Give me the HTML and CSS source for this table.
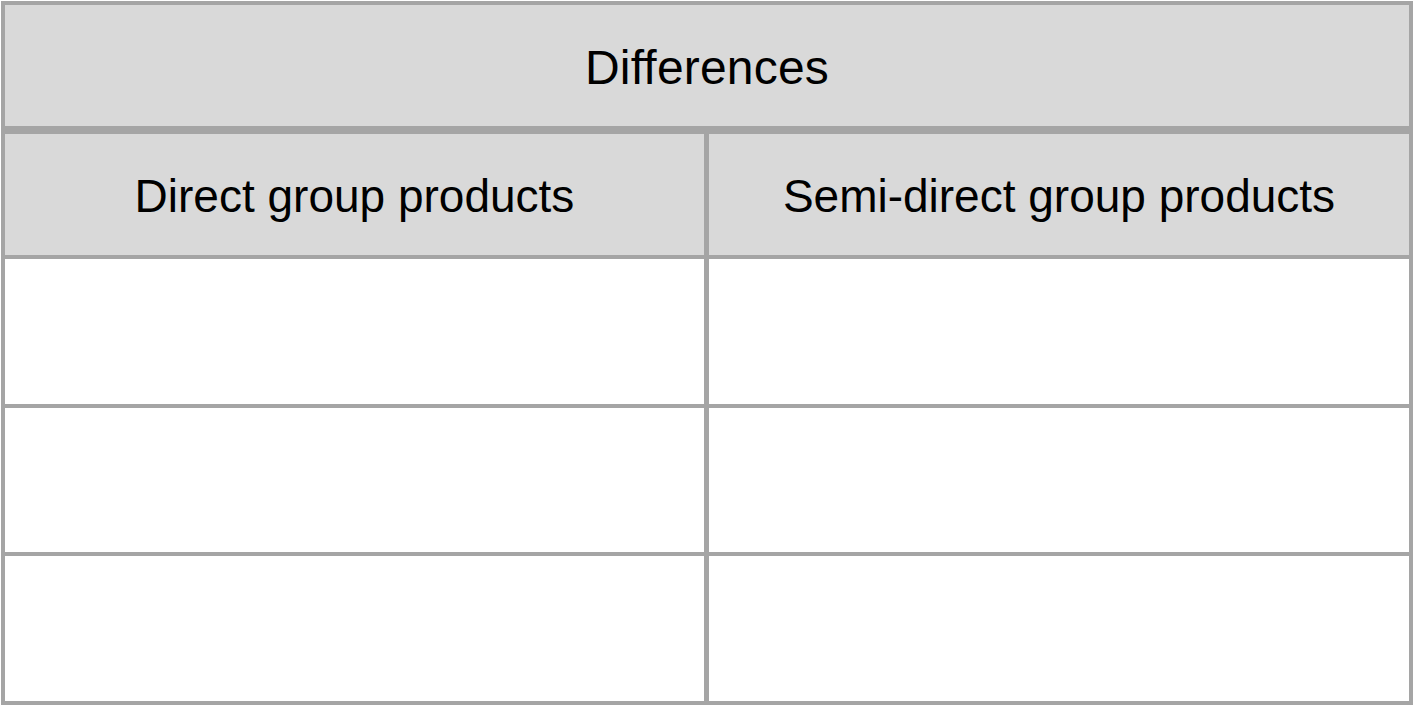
FILE: index.html
```html
<!DOCTYPE html>
<html>
<head>
<meta charset="utf-8">
<link rel="stylesheet" href="styles.css">
</head>
<body>
<table class="diff">
  <colgroup><col class="c1"><col class="c2"></colgroup>
  <thead>
    <tr class="r-title"><th colspan="2">Differences</th></tr>
    <tr class="r-head"><th>Direct group products</th><th>Semi-direct group products</th></tr>
  </thead>
  <tbody>
    <tr class="r-body"><td></td><td></td></tr>
    <tr class="r-body r-mid"><td></td><td></td></tr>
    <tr class="r-body"><td></td><td></td></tr>
  </tbody>
</table>
</body>
</html>
```
FILE: styles.css
```css
html, body { margin: 0; padding: 0; background: #ffffff; }
body { padding: 1px 0 0 1px; }
.diff {
  border-collapse: separate;
  border-spacing: 0;
  table-layout: fixed;
  width: 1412px;
  border-top: 4px solid #a5a5a5;
  border-left: 4px solid #a5a5a5;
  font-family: "Liberation Sans", Arial, sans-serif;
  font-variant-ligatures: none;
  font-feature-settings: "liga" 0, "clig" 0;
  color: #000;
}
.c1 { width: 704px; }
.c2 { width: 704px; }
.diff th, .diff td {
  padding: 0;
  box-sizing: border-box;
  border-right: 4px solid #a5a5a5;
  border-bottom: 4px solid #a5a5a5;
  font-weight: normal;
  font-size: 46px;
  text-align: center;
  vertical-align: middle;
}
.diff th { background: #d9d9d9; }
.diff tr > :first-child:not([colspan]) { border-right-width: 5px; }
.r-title th { height: 129px; border-bottom-width: 8px; padding-top: 4px; font-size: 48px; letter-spacing: 0.2px; }
.r-head th { height: 125px; padding-top: 2px; }
.r-body td { height: 149px; }
.r-mid td { height: 148px; }
```
